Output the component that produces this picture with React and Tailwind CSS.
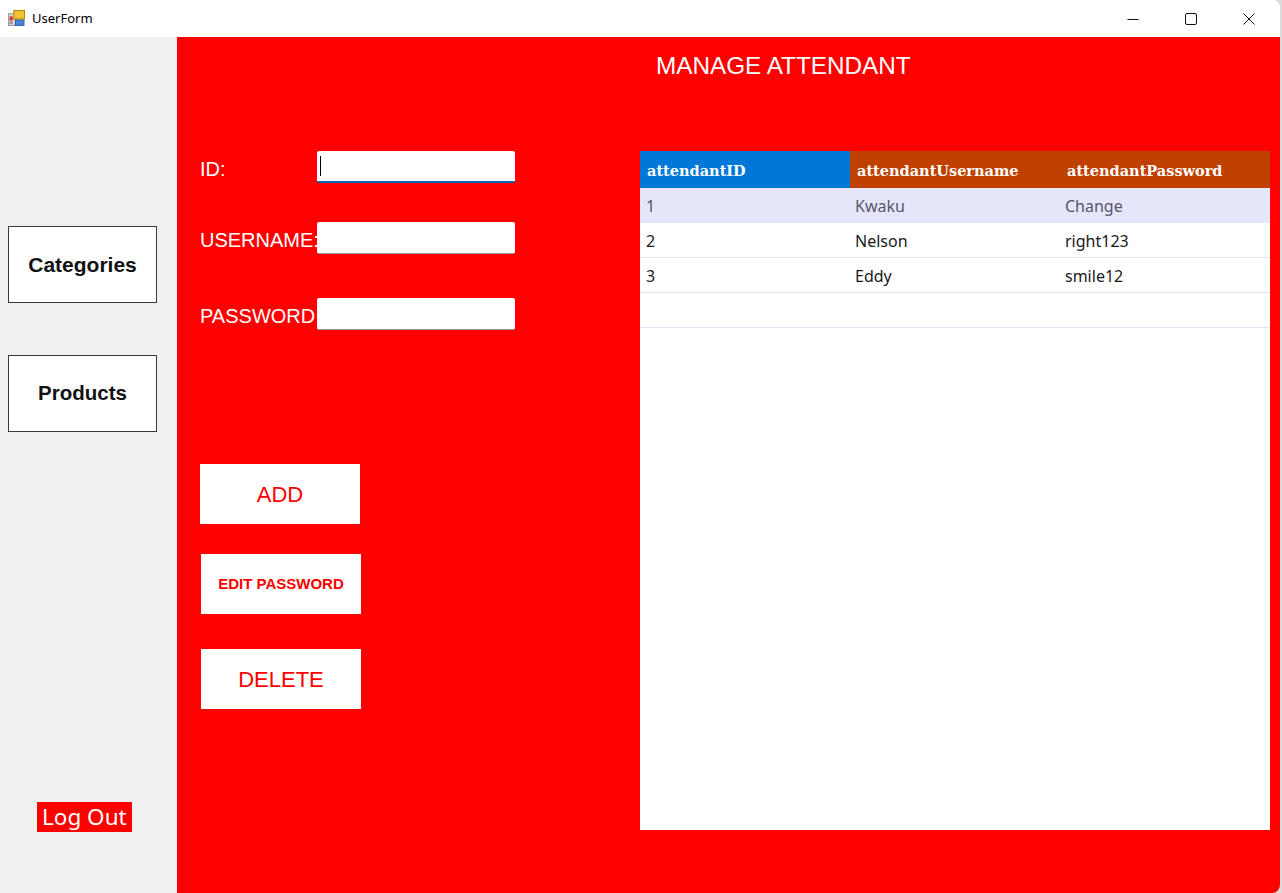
import React from "react";

const rows = [
  { id: "1", user: "Kwaku", pass: "Change", sel: true },
  { id: "2", user: "Nelson", pass: "right123" },
  { id: "3", user: "Eddy", pass: "smile12" },
  { id: "", user: "", pass: "" },
];

function AppIcon() {
  return (
    <svg width="17" height="17" viewBox="0 0 16 16">
      <rect x="0.5" y="3.5" width="7" height="11" fill="#d8d8d8" stroke="#9a9a9a" />
      <rect x="1.5" y="6" width="3" height="4" fill="#d93030" />
      <rect x="1.5" y="11" width="3" height="2" fill="#8a8a8a" />
      <rect x="5.5" y="0.5" width="10" height="8" fill="#f3c530" stroke="#b8860b" />
      <rect x="7" y="9.5" width="8" height="5" fill="#4a86d8" stroke="#2d5fa8" />
    </svg>
  );
}

export default function App() {
  return (
    <div className="w-[1282px] h-[893px] bg-[#dcdcdc] overflow-hidden" style={{ fontFamily: "'Liberation Sans', Arial, sans-serif" }}>
      <div className="w-[1280px] h-[893px] flex flex-col rounded-tr-[8px] rounded-br-[8px] overflow-hidden bg-white">
        {/* Title bar */}
        <div className="h-[37px] bg-white flex items-center shrink-0">
          <div className="pl-[8px] flex items-center">
            <AppIcon />
          </div>
          <span className="ml-[7px] text-[13px] text-black" style={{ fontFamily: "'Noto Sans', sans-serif" }}>UserForm</span>
          <div className="ml-auto flex items-center">
            <div className="w-[58px] h-[37px] flex items-center justify-center">
              <svg width="12" height="12" viewBox="0 0 12 12"><path d="M0.5 6.5h11" stroke="#111" strokeWidth="1" /></svg>
            </div>
            <div className="w-[58px] h-[37px] flex items-center justify-center">
              <svg width="12" height="12" viewBox="0 0 12 12"><rect x="0.5" y="0.5" width="11" height="11" rx="1.5" fill="none" stroke="#111" strokeWidth="1" /></svg>
            </div>
            <div className="w-[58px] h-[37px] flex items-center justify-center mr-[2px]">
              <svg width="12" height="12" viewBox="0 0 12 12"><path d="M0.5 0.5l11 11M11.5 0.5l-11 11" stroke="#111" strokeWidth="1" /></svg>
            </div>
          </div>
        </div>

        {/* Body */}
        <div className="flex flex-1">
          {/* Sidebar */}
          <div className="w-[177px] bg-[#f0f0f0] flex flex-col pt-[189px] pl-[8px]">
            <button className="w-[149px] h-[77px] bg-white border border-[#3a3a3a] text-[21px] font-bold text-[#111]">Categories</button>
            <button className="mt-[52px] w-[149px] h-[77px] bg-white border border-[#3a3a3a] text-[20.5px] font-bold text-[#111]">Products</button>
            <div className="mt-[370px] ml-[29px]">
              <span className="inline-block bg-[#ff0000] text-white text-[22.5px] leading-[30px] px-[5px]" style={{ fontFamily: "'Noto Sans', sans-serif" }}>Log Out</span>
            </div>
          </div>

          {/* Main */}
          <div className="flex-1 bg-[#ff0000] flex flex-col">
            <div className="h-[114px] pt-[15px] pl-[479px]">
              <div className="text-[24.3px] leading-[28px] text-white whitespace-nowrap">MANAGE ATTENDANT</div>
            </div>
            <div className="flex">
              {/* Form */}
              <div className="w-[463px] pl-[23px] flex flex-col">
                <div className="flex items-center h-[32px]">
                  <span className="w-[117px] pt-[4px] text-[20px] text-white whitespace-nowrap">ID:</span>
                  <div className="relative w-[198px] h-[32px] bg-white rounded-[2px] border-b-2 border-[#0067c0] flex items-center pl-[3px]">
                    <div className="w-px h-[20px] bg-black" />
                  </div>
                </div>
                <div className="flex items-center h-[32px] mt-[39px]">
                  <span className="w-[117px] pt-[4px] text-[20px] text-white whitespace-nowrap">USERNAME:</span>
                  <div className="relative w-[198px] h-[32px] bg-white rounded-[2px] border-b border-[#9a9a9a]" />
                </div>
                <div className="flex items-center h-[32px] mt-[44px]">
                  <span className="w-[117px] pt-[4px] text-[20px] text-white whitespace-nowrap">PASSWORD</span>
                  <div className="relative w-[198px] h-[32px] bg-white rounded-[2px] border-b border-[#9a9a9a]" />
                </div>
                <button className="mt-[134px] w-[160px] h-[60px] bg-white text-[#ff0000] text-[22px]">ADD</button>
                <button className="mt-[30px] ml-[1px] w-[160px] h-[60px] bg-white text-[#ff0000] text-[15px] font-bold">EDIT PASSWORD</button>
                <button className="mt-[35px] ml-[1px] w-[160px] h-[60px] bg-white text-[#ff0000] text-[22px]">DELETE</button>
              </div>

              {/* Grid */}
              <div className="w-[630px] h-[679px] bg-white flex flex-col">
                <div className="flex h-[37px] text-white text-[14.5px] font-bold" style={{ fontFamily: "'DejaVu Serif', serif" }}>
                  <div className="w-[210px] bg-[#0078d7] flex items-center pl-[7px] pt-[3px]">attendantID</div>
                  <div className="w-[210px] bg-[#c04000] flex items-center pl-[7px] pt-[3px]">attendantUsername</div>
                  <div className="w-[210px] bg-[#c04000] flex items-center pl-[7px] pt-[3px]">attendantPassword</div>
                </div>
                {rows.map((r, i) => (
                  <div
                    key={i}
                    className={
                      "flex h-[35px] border-b border-[#e3e3f8] text-[16px] " +
                      (r.sel ? "bg-[#e6e6fa] text-[#55556e]" : "bg-white text-[#1a1a1a]")
                    }
                    style={{ fontFamily: "'Noto Sans', sans-serif" }}
                  >
                    <div className="w-[210px] flex items-center pl-[6px] pt-[2px]">{r.id}</div>
                    <div className="w-[210px] flex items-center pl-[5px] pt-[2px]">{r.user}</div>
                    <div className="w-[210px] flex items-center pl-[5px] pt-[2px]">{r.pass}</div>
                  </div>
                ))}
              </div>
            </div>
          </div>
        </div>
      </div>
    </div>
  );
}
